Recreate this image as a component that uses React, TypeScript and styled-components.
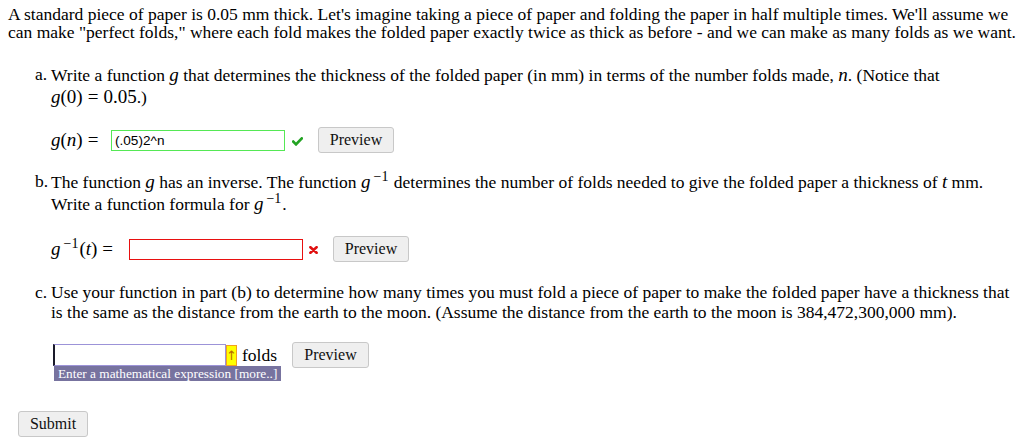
import React from "react";
import styled, { createGlobalStyle, css } from "styled-components";

const Global = createGlobalStyle`
  html, body { margin: 0; padding: 0; background: #fff; }
  body { font-family: "Liberation Serif", "Times New Roman", serif; color: #000; }
`;

const Page = styled.div`
  padding: 5px 2px 0 8px;
  font-family: "Liberation Serif", "Times New Roman", serif;
  font-size: 17.5px;
  color: #000;
`;

const Intro = styled.p`
  margin: 0;
  line-height: 18px;
`;

const Part = styled.div<{ $top: number; $lh: number }>`
  display: grid;
  grid-template-columns: 16px 1fr;
  margin: ${(p) => p.$top}px 6px 0 27px;
  line-height: ${(p) => p.$lh}px;
`;

const Label = styled.span``;

const Body = styled.div``;

const Text = styled.div``;

const Row = styled.div<{ $top: number }>`
  display: flex;
  align-items: center;
  margin-top: ${(p) => p.$top}px;
  line-height: 18px;
`;

const Math = styled.span`
  font-family: "Liberation Serif", "Times New Roman", serif;
  font-size: 19px;
  white-space: nowrap;
`;

const RowMath = styled(Math)<{ $w: number }>`
  display: inline-block;
  flex: none;
  width: ${(p) => p.$w}px;
`;

const V = styled.i`
  font-style: italic;
`;

const Eq = styled.span`
  padding: 0 5px;
`;

const Sup = styled.sup`
  font-size: 14px;
  line-height: 0;
  vertical-align: 7px;
  margin: 0 1px 0 3px;
`;

const Answer = styled.input<{ $tone: "ok" | "bad" }>`
  box-sizing: border-box;
  flex: none;
  width: 174px;
  height: 21px;
  margin: 0;
  padding: 1px 3px;
  border-width: 1px;
  border-style: solid;
  border-radius: 0;
  outline: none;
  font-family: "Liberation Sans", Arial, sans-serif;
  font-size: 13.6px;
  color: #000;
  background: #fff;
  ${(p) =>
    p.$tone === "ok"
      ? css`
          border-color: #55e855;
        `
      : css`
          border-color: #e81010;
        `}
`;

const Mark = styled.span<{ $ml: number; $mr: number }>`
  display: inline-flex;
  margin: 2px ${(p) => p.$mr}px 0 ${(p) => p.$ml}px;
`;

const Button = styled.button<{ $w: number }>`
  box-sizing: border-box;
  width: ${(p) => p.$w}px;
  height: 26px;
  padding: 0;
  background: #efefef;
  border: 1px solid #c8c8c8;
  border-radius: 3px;
  font-family: "Liberation Serif", "Times New Roman", serif;
  font-size: 16px;
  color: #111;
`;

const FieldWrap = styled.span`
  position: relative;
  display: inline-flex;
  align-items: center;
  margin-left: 2px;
`;

const FocusInput = styled.input`
  box-sizing: border-box;
  width: 173px;
  height: 22px;
  margin: 0;
  padding: 1px 3px;
  border: 1px solid #9c93d8;
  border-left: 2px solid #1a1a2a;
  outline: none;
  background: #fff;
  font-family: "Liberation Sans", Arial, sans-serif;
  font-size: 13.3px;
`;

const Arrow = styled.span`
  box-sizing: border-box;
  display: inline-flex;
  align-items: center;
  justify-content: center;
  width: 11px;
  height: 21px;
  background: #ffff00;
  border: 1px solid #f0a020;
  color: #b86a00;
  font-family: "DejaVu Sans", sans-serif;
  font-size: 13px;
  line-height: 1;
`;

const Tip = styled.span`
  position: absolute;
  top: 22px;
  left: 1px;
  height: 15px;
  padding: 0 4px;
  background: #77739f;
  color: #fff;
  font-family: "Liberation Serif", "Times New Roman", serif;
  font-size: 13.3px;
  line-height: 15px;
  white-space: nowrap;
`;

const Unit = styled.span`
  margin: 0 15px 0 5px;
`;

const SubmitRow = styled.div`
  margin: 43px 0 0 10px;
`;

const Check = () => (
  <svg width="11" height="9" viewBox="0 0 11 9">
    <path d="M1.3 4.6 L4 7.4 L9.8 1.4" fill="none" stroke="#22a322" strokeWidth="2.8" strokeLinecap="round" strokeLinejoin="round" />
  </svg>
);

const Cross = () => (
  <svg width="9" height="8" viewBox="0 0 9 8">
    <path d="M1.4 1.2 L7.6 6.8 M7.6 1.2 L1.4 6.8" fill="none" stroke="#e01010" strokeWidth="2.6" strokeLinecap="round" />
  </svg>
);

export default function App() {
  return (
    <>
      <Global />
      <Page>
        <Intro>
          A standard piece of paper is 0.05 mm thick. Let's imagine taking a piece of paper and folding the paper in half
          multiple times. We'll assume we can make "perfect folds," where each fold makes the folded paper exactly twice as
          thick as before - and we can make as many folds as we want.
        </Intro>

        <Part $top={23} $lh={21}>
          <Label>a.</Label>
          <Body>
            <Text>
              Write a function <Math><V>g</V></Math> that determines the thickness of the folded paper (in mm) in terms of the
              number folds made, <Math><V>n</V></Math>. (Notice that{" "}
              <Math>
                <V>g</V>(0)<Eq>=</Eq>0.05
              </Math>
              .)
            </Text>
            <Row $top={19}>
              <RowMath $w={60}>
                <V>g</V>(<V>n</V>)<Eq>=</Eq>
              </RowMath>
              <Answer $tone="ok" defaultValue="(.05)2^n" readOnly />
              <Mark $ml={7} $mr={15}>
                <Check />
              </Mark>
              <Button $w={76}>Preview</Button>
            </Row>
          </Body>
        </Part>

        <Part $top={18} $lh={21}>
          <Label>b.</Label>
          <Body>
            <Text>
              The function <Math><V>g</V></Math> has an inverse. The function{" "}
              <Math>
                <V>g</V>
                <Sup>−1</Sup>
              </Math>{" "}
              determines the number of folds needed to give the folded paper a thickness of <Math><V>t</V></Math> mm. Write a
              function formula for{" "}
              <Math>
                <V>g</V>
                <Sup>−1</Sup>
              </Math>
              .
            </Text>
            <Row $top={21}>
              <RowMath $w={78}>
                <V>g</V>
                <Sup>−1</Sup>(<V>t</V>)<Eq>=</Eq>
              </RowMath>
              <Answer $tone="bad" defaultValue="" readOnly />
              <Mark $ml={6} $mr={15}>
                <Cross />
              </Mark>
              <Button $w={76}>Preview</Button>
            </Row>
          </Body>
        </Part>

        <Part $top={20} $lh={20}>
          <Label>c.</Label>
          <Body>
            <Text>
              Use your function in part (b) to determine how many times you must fold a piece of paper to make the folded
              paper have a thickness that is the same as the distance from the earth to the moon. (Assume the distance from
              the earth to the moon is 384,472,300,000 mm).
            </Text>
            <Row $top={20}>
              <FieldWrap>
                <FocusInput defaultValue="" />
                <Arrow>↑</Arrow>
                <Tip>Enter a mathematical expression [more..]</Tip>
              </FieldWrap>
              <Unit>folds</Unit>
              <Button $w={77}>Preview</Button>
            </Row>
          </Body>
        </Part>

        <SubmitRow>
          <Button $w={70}>Submit</Button>
        </SubmitRow>
      </Page>
    </>
  );
}
